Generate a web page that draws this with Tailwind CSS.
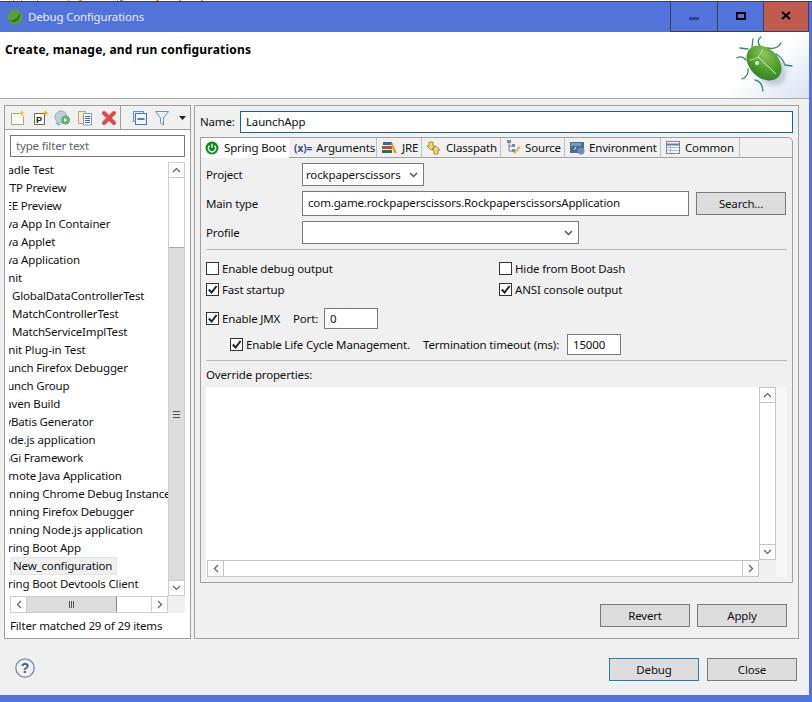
<!DOCTYPE html>
<html>
<head>
<meta charset="utf-8">
<script src="https://cdn.jsdelivr.net/npm/@tailwindcss/browser@4"></script>
</head>
<body class="m-0 bg-white">
<div class="w-[812px] h-[702px] overflow-hidden flex flex-col font-['Noto_Sans',sans-serif] text-[11.5px] tracking-[-0.16px] leading-[16px] text-[#111] bg-[#5273da]">
  <!-- desktop sliver above window -->
  <div class="h-[1px] bg-white shrink-0 flex">
    <div class="ml-[13px] w-[1px] bg-[#e0a040]"></div><div class="ml-[7px] w-[1px] bg-[#aaa]"></div><div class="ml-[15px] w-[1px] bg-[#aaa]"></div><div class="ml-[30px] w-[1px] bg-[#aaa]"></div><div class="ml-[10px] w-[3px] bg-[#e0a040]"></div><div class="ml-[35px] w-[1px] bg-[#aaa]"></div><div class="ml-[2px] w-[3px] bg-[#7090c0]"></div><div class="ml-[33px] w-[3px] bg-[#e0a040]"></div><div class="ml-[20px] w-[2px] bg-[#e0a040]"></div><div class="ml-[20px] w-[2px] bg-[#e0a040]"></div>
  </div>
  <div class="h-[1px] bg-[#3a3f55] shrink-0"></div>
  <!-- title bar -->
  <div class="h-[30px] shrink-0 flex items-stretch bg-[#5273da]">
    <div class="flex-1 flex items-center pl-[7px] gap-[5px] text-white">
      <svg width="16" height="16" viewBox="0 0 17 17"><circle cx="8.500" cy="8.500" r="8" fill="#5a9e3a"/><path d="M2 12c4 1 9-1 12-8 1 5-2 10-7 10-2 0-4-1-5-2z" fill="#2f7a2a"/></svg>
      <span class="text-[#e8edfb]">Debug Configurations</span>
    </div>
    <div class="w-[47px] border-l border-b border-[#3a3f55] flex items-center justify-center pt-[3px]"><div class="w-[10px] h-[3px] bg-[#2e4590]"></div></div>
    <div class="w-[46px] border-l border-b border-[#3a3f55] flex items-center justify-center pb-[2px]"><div class="w-[10px] h-[8px] border-2 border-black"></div></div>
    <div class="w-[46px] border-l border-b border-r border-[#3a3f55] bg-[#c05b50] flex items-center justify-center pb-[2px]">
      <svg width="10" height="9" viewBox="0 0 10 9"><path d="M1 1l8 7M9 1l-8 7" stroke="#000" stroke-width="2.200"/></svg>
    </div>
    <div class="w-[3px]"></div>
  </div>
  <!-- window body -->
  <div class="h-[663px] shrink-0 mr-[3px] flex flex-col bg-[#f0f0f0]">
    <!-- banner -->
    <div class="h-[67px] shrink-0 bg-white border-b border-[#a8a8a8] flex justify-between">
      <div class="pl-[5px] pt-[10px] font-bold text-black text-[12px] tracking-[0.2px]">Create, manage, and run configurations</div>
      <div class="w-[84px] h-[66px] bg-linear-to-br from-white from-45% to-[#dbe1f2]">
        <svg width="80" height="66" viewBox="0 2 80 66">
          <defs>
            <radialGradient id="bd" cx="35%" cy="30%" r="75%"><stop offset="0" stop-color="#8cc45a"/><stop offset=".6" stop-color="#4f9c2c"/><stop offset="1" stop-color="#2f8426"/></radialGradient>
            <filter id="sh" x="-30%" y="-30%" width="160%" height="160%"><feGaussianBlur stdDeviation="2.500"/></filter>
          </defs>
          <ellipse cx="44" cy="38" rx="20" ry="14" transform="rotate(45 44 38)" fill="#8a94b0" opacity=".45" filter="url(#sh)"/>
          <g fill="none" stroke="#2c8a60" stroke-width="1.300" stroke-linecap="round" stroke-linejoin="round">
            <path d="M35 16q-4-5 1-9"/><path d="M42 18q10 2 14-5"/><path d="M23 19l-8-1"/><path d="M27 17l1-8"/><path d="M21 30q-4-5-9-2"/><path d="M23 39q1 7-6 10"/><path d="M30 50q7 1 8 11"/><path d="M51 24q6 3 9 11l7 1"/>
          </g>
          <ellipse cx="39" cy="33" rx="20" ry="14.500" transform="rotate(45 39 33)" fill="url(#bd)"/>
          <path d="M33 27l18 17" stroke="#d8efd8" stroke-width="1"/>
          <path d="M38 19c-2 4-3 6-5 8-3 2-6 3-9 3" stroke="#d8efd8" stroke-width=".7" fill="none"/>
          <circle cx="32" cy="33" r="2" fill="#dcefc4"/>
        </svg>
      </div>
    </div>
    <!-- panels -->
    <div class="flex gap-[3px] pl-[4px] pt-[6px] shrink-0">
      <!-- left panel -->
      <div class="w-[187px] h-[534px] shrink-0 border border-[#a0a0a0] bg-white flex flex-col px-[5px]">
        <div class="h-[24px] -mx-[5px] shrink-0 border-b border-[#a0a0a0] bg-[#f0f0f0] flex items-center">
          <div class="flex items-center pl-[5px] pr-[3px] h-full border-r border-[#a0a0a0]">
            <svg width="16" height="16" viewBox="0 0 16 16"><path d="M1.500 3.500h9l3 3v8h-12z" fill="#fbfbf2" stroke="#a8a878"/><path d="M12 0l1 2 2 1-2 1-1 2-1-2-2-1 2-1z" fill="#f2c94c"/></svg>
            <svg class="ml-[7px]" width="16" height="16" viewBox="0 0 16 16"><path d="M1.500 3.500h10v11h-10z" fill="#fbfbf2" stroke="#6b6b50"/><text x="3" y="13" font-size="9" font-weight="700" font-family="Liberation Sans" fill="#222">P</text><path d="M12.500 0l1 2 2 1-2 1-1 2-1-2-2-1 2-1z" fill="#e0b030"/></svg>
            <svg class="ml-[5px]" width="16" height="16" viewBox="0 0 16 16"><circle cx="7" cy="7" r="6" fill="#c2cede" stroke="#99a8bc"/><circle cx="11.500" cy="10" r="4.500" fill="#5fb36a"/><path d="M10 8l3.500 2-3.500 2z" fill="#fff"/><path d="M2 13l4 2" stroke="#8aa0c0" stroke-width="1.500"/></svg>
            <svg class="ml-[7px]" width="16" height="16" viewBox="0 0 16 16"><path d="M1.500 1.500h7v12h-7z" fill="#f5ecd0" stroke="#b8a878"/><path d="M6.500 3.500h8v11.500h-8z" fill="#fff" stroke="#8a9ab0"/><path d="M8 6.500h5M8 8.500h5M8 10.500h5M8 12.500h5" stroke="#3a6ab0"/></svg>
            <svg class="ml-[8px]" width="16" height="16" viewBox="0 0 16 16"><path d="M3 3l10 10M13 3L3 13" stroke="#e04a4a" stroke-width="4" stroke-linecap="round"/></svg>
          </div>
          <svg class="ml-[11px]" width="16" height="16" viewBox="0 0 16 16"><rect x="1.500" y="1.500" width="10" height="10" fill="#dce8f4" stroke="#6a90b8"/><rect x="3.500" y="3.500" width="11" height="11" fill="#eef4fa" stroke="#4a78a8"/><path d="M5.500 9h7" stroke="#2a5a90" stroke-width="1.500"/></svg>
          <svg class="ml-[6px]" width="16" height="16" viewBox="0 0 16 16"><path d="M1.500 1.500h13l-5 6.500v7l-3-2V8z" fill="#e8f0f8" stroke="#7492b0"/></svg>
          <svg class="ml-[8px]" width="9" height="6" viewBox="0 0 9 6"><path d="M1 1h7L4.500 5z" fill="#222"/></svg>
        </div>
        <div class="mt-[5px] h-[22px] shrink-0 border border-[#767676] pl-[5px] flex items-center text-[#5a6270] bg-white">type filter text</div>
        <!-- list + scrollbar -->
        <div class="mt-[5px] h-[434px] shrink-0 flex -ml-[1px]">
          <div class="w-[159px] shrink-0 overflow-hidden">
            <div class="-mt-[1px] leading-[18px] whitespace-nowrap">
              <div class="h-[18px] -ml-[14px]">Gradle Test</div>
              <div class="h-[18px] -ml-[14px]">HTTP Preview</div>
              <div class="h-[18px] -ml-[13px]">J2EE Preview</div>
              <div class="h-[18px] -ml-[12px]">Java App In Container</div>
              <div class="h-[18px] -ml-[12px]">Java Applet</div>
              <div class="h-[18px] -ml-[12px]">Java Application</div>
              <div class="h-[18px] -ml-[12px]">JUnit</div>
              <div class="h-[18px] pl-[3px]">GlobalDataControllerTest</div>
              <div class="h-[18px] pl-[3px]">MatchControllerTest</div>
              <div class="h-[18px] pl-[3px]">MatchServiceImplTest</div>
              <div class="h-[18px] -ml-[12px]">JUnit Plug-in Test</div>
              <div class="h-[18px] -ml-[14px]">Launch Firefox Debugger</div>
              <div class="h-[18px] -ml-[14px]">Launch Group</div>
              <div class="h-[18px] -ml-[14px]">Maven Build</div>
              <div class="h-[18px] -ml-[14px]">MyBatis Generator</div>
              <div class="h-[18px] -ml-[14px]">Node.js application</div>
              <div class="h-[18px] -ml-[14px]">OSGi Framework</div>
              <div class="h-[18px] -ml-[14px]">Remote Java Application</div>
              <div class="h-[18px] -ml-[14px]">Running Chrome Debug Instance</div>
              <div class="h-[18px] -ml-[14px]">Running Firefox Debugger</div>
              <div class="h-[18px] -ml-[14px]">Running Node.js application</div>
              <div class="h-[18px] -ml-[14px]">Spring Boot App</div>
              <div class="h-[18px] ml-[1px] w-[107px] pl-[2px] bg-[#f0f0f0] border border-[#e4e4e4] leading-[16px]">New_configuration</div>
              <div class="h-[18px] -ml-[14px]">Spring Boot Devtools Client</div>
            </div>
          </div>
          <div class="w-[17px] shrink-0 flex flex-col bg-white border-x border-[#cdcdcd]">
            <div class="h-[16px] border-y border-[#cdcdcd] flex items-center justify-center"><svg width="9" height="6" viewBox="0 0 9 6"><path d="M1 5l3.500-3.500L8 5" fill="none" stroke="#606060" stroke-width="1.200"/></svg></div>
            <div class="h-[69px]"></div>
            <div class="flex-1 bg-[#dcdcdc] border-t border-[#a8a8a8] flex items-center justify-center"><div class="w-[7px] h-[7px] border-y border-[#555] flex items-center"><div class="w-full h-[1px] bg-[#555]"></div></div></div>
            <div class="h-[16px] border-y border-[#cdcdcd] flex items-center justify-center"><svg width="9" height="6" viewBox="0 0 9 6"><path d="M1 1l3.500 3.500L8 1" fill="none" stroke="#606060" stroke-width="1.200"/></svg></div>
          </div>
        </div>
        <div class="h-[17px] shrink-0 flex bg-[#f0f0f0]">
          <div class="w-[158px] flex border border-[#cdcdcd] bg-white">
            <div class="w-[16px] border-r border-[#cdcdcd] flex items-center justify-center"><svg width="6" height="9" viewBox="0 0 6 9"><path d="M5 1L1.500 4.500 5 8" fill="none" stroke="#606060" stroke-width="1.200"/></svg></div>
            <div class="w-[90px] bg-[#dcdcdc] border-r border-[#888] flex items-center justify-center gap-[1px]"><div class="w-[1px] h-[7px] bg-[#555]"></div><div class="w-[1px] h-[7px] bg-[#555]"></div><div class="w-[1px] h-[7px] bg-[#555]"></div></div>
            <div class="flex-1"></div>
            <div class="w-[16px] border-l border-[#cdcdcd] flex items-center justify-center"><svg width="6" height="9" viewBox="0 0 6 9"><path d="M1 1l3.500 3.500L1 8" fill="none" stroke="#606060" stroke-width="1.200"/></svg></div>
          </div>
        </div>
        <div class="mt-[5px] h-[16px] shrink-0">Filter matched 29 of 29 items</div>
      </div>
      <!-- right panel -->
      <div class="w-[605px] h-[534px] shrink-0 border border-[#a0a0a0] flex flex-col px-[5px]">
        <div class="flex items-center h-[22px] mt-[5px] shrink-0">
          <span class="w-[40px]">Name:</span>
          <div class="w-[553px] h-[22px] border border-[#1e5f8e] bg-white pl-[5px] flex items-center">LaunchApp</div>
        </div>
        <!-- tab folder -->
        <div class="mt-[4px] w-[593px] h-[446px] shrink-0 border border-[#a0a0a0] rounded-tr-[5px] flex flex-col">
          <div class="h-[20px] flex items-stretch shrink-0">
            <div class="w-[88px] bg-white rounded-tl-[4px] flex items-center gap-[5px] pl-[4px] shrink-0">
              <svg width="14" height="14" viewBox="0 0 14 14"><circle cx="7" cy="7" r="6.500" fill="#0a8a1f"/><path d="M4.500 4.800a3.500 3.500 0 1 0 5 0" fill="none" stroke="#fff" stroke-width="1.300"/><path d="M7 2.800v4" stroke="#fff" stroke-width="1.300"/></svg>
              <span>Spring Boot</span>
            </div>
            <div class="w-[88px] border-b border-[#a0a0a0] border-r border-r-[#c0c0c0] flex items-center gap-[4px] pl-[5px] shrink-0"><span class="text-[#3a4a7a] text-[10px] font-bold tracking-[0px]">(x)=</span><span>Arguments</span></div>
            <div class="w-[45px] border-b border-[#a0a0a0] border-r border-r-[#c0c0c0] flex items-center gap-[4px] pl-[5px] shrink-0">
              <svg width="16" height="13" viewBox="0 0 16 13"><rect x="0" y="9" width="10" height="3" fill="#3a6a4a"/><rect x="0" y="5" width="10" height="3" fill="#b05030"/><rect x="1" y="1" width="9" height="3" fill="#3a6a9a"/><path d="M10 1l5 11h-3l-3-8z" fill="#e0a030"/></svg><span>JRE</span></div>
            <div class="w-[79px] border-b border-[#a0a0a0] border-r border-r-[#c0c0c0] flex items-center gap-[4px] pl-[5px] shrink-0">
              <svg width="15" height="14" viewBox="0 0 15 14"><path d="M2 1h4v4h2L4 9 0 5h2z" fill="#f3d67a" stroke="#9a7a20" stroke-width=".8"/><path d="M11 13H7V9H5l4-4 4 4h-2z" fill="#f3d67a" stroke="#9a7a20" stroke-width=".8"/></svg><span>Classpath</span></div>
            <div class="w-[64px] border-b border-[#a0a0a0] border-r border-r-[#c0c0c0] flex items-center gap-[4px] pl-[5px] shrink-0">
              <svg width="15" height="15" viewBox="0 0 15 15"><path d="M3 2v9h3M3 6h3" fill="none" stroke="#6a7a9a"/><rect x="1" y="0" width="4" height="3" fill="#7a8aaa"/><rect x="6" y="4" width="3" height="3" fill="#7a8aaa"/><rect x="6" y="9" width="3" height="3" fill="#7a8aaa"/><path d="M7 13l6-7 1.500 1.500-6 6.500z" fill="#e8b040"/></svg><span>Source</span></div>
            <div class="w-[96px] border-b border-[#a0a0a0] border-r border-r-[#c0c0c0] flex items-center gap-[4px] pl-[5px] shrink-0">
              <svg width="15" height="14" viewBox="0 0 15 14"><rect x="0" y="1" width="14" height="11" fill="#4a6a90"/><rect x="1" y="2" width="10" height="3" fill="#7a98b8"/><path d="M4 9l2-3" stroke="#fff"/><circle cx="11" cy="10" r="3.500" fill="#6a8fb8"/></svg><span>Environment</span></div>
            <div class="w-[79px] border-b border-[#a0a0a0] border-r border-r-[#c0c0c0] flex items-center gap-[5px] pl-[5px] shrink-0">
              <svg width="14" height="13" viewBox="0 0 14 13"><rect x="0.500" y="0.500" width="13" height="12" fill="#f4f4f4" stroke="#7a8a9a"/><path d="M0.500 3.500h13" stroke="#6a7a9a" stroke-width="2"/><path d="M1 6.500h12M1 9.500h12M4.500 4v8" stroke="#b0b8c4"/></svg><span>Common</span></div>
            <div class="flex-1 border-b border-[#a0a0a0]"></div>
          </div>
          <!-- tab body -->
          <div class="flex-1 flex flex-col px-[5px]">
            <div class="flex items-center h-[23px] mt-[5px] shrink-0">
              <span class="w-[96px]">Project</span>
              <div class="w-[122px] h-[23px] border border-[#7a7a7a] bg-white pl-[3px] flex items-center justify-between pr-[5px]"><span>rockpaperscissors</span><svg width="9" height="6" viewBox="0 0 9 6"><path d="M1 1l3.500 3.500L8 1" fill="none" stroke="#555" stroke-width="1.500"/></svg></div>
            </div>
            <div class="flex items-center h-[25px] mt-[5px] shrink-0">
              <span class="w-[96px]">Main type</span>
              <div class="w-[387px] h-[25px] border border-[#7a7a7a] bg-white pl-[5px] flex items-center pb-[2px]">com.game.rockpaperscissors.RockpaperscissorsApplication</div>
              <div class="ml-[7px] w-[90px] h-[23px] border border-[#7a7a7a] bg-[#dddddd] flex items-center justify-center">Search...</div>
            </div>
            <div class="flex items-center h-[23px] mt-[5px] shrink-0">
              <span class="w-[96px]">Profile</span>
              <div class="w-[277px] h-[23px] border border-[#7a7a7a] bg-white flex items-center justify-end pr-[5px]"><svg width="9" height="6" viewBox="0 0 9 6"><path d="M1 1l3.500 3.500L8 1" fill="none" stroke="#555" stroke-width="1.500"/></svg></div>
            </div>
            <div class="h-[1px] w-[581px] mt-[5px] bg-[#b8b8b8] shrink-0"></div>
            <div class="flex mt-[8px] h-[21px] items-center shrink-0">
              <div class="w-[293px] flex items-center gap-[3px]"><div class="w-[13px] h-[13px] border border-[#333] bg-white"></div><span>Enable debug output</span></div>
              <div class="flex items-center gap-[3px]"><div class="w-[13px] h-[13px] border border-[#333] bg-white"></div><span>Hide from Boot Dash</span></div>
            </div>
            <div class="flex h-[21px] items-center shrink-0">
              <div class="w-[293px] flex items-center gap-[3px]"><svg width="13" height="13" viewBox="0 0 13 13"><rect x=".5" y=".5" width="12" height="12" fill="#fff" stroke="#333"/><path d="M2.800 6.500l2.800 3 5-6.500" fill="none" stroke="#222" stroke-width="2"/></svg><span>Fast startup</span></div>
              <div class="flex items-center gap-[3px]"><svg width="13" height="13" viewBox="0 0 13 13"><rect x=".5" y=".5" width="12" height="12" fill="#fff" stroke="#333"/><path d="M2.800 6.500l2.800 3 5-6.500" fill="none" stroke="#222" stroke-width="2"/></svg><span>ANSI console output</span></div>
            </div>
            <div class="flex h-[21px] mt-[8px] items-center shrink-0">
              <svg width="13" height="13" viewBox="0 0 13 13"><rect x=".5" y=".5" width="12" height="12" fill="#fff" stroke="#333"/><path d="M2.800 6.500l2.800 3 5-6.500" fill="none" stroke="#222" stroke-width="2"/></svg><span class="ml-[3px] w-[71px]">Enable JMX</span><span class="w-[31px]">Port:</span>
              <div class="w-[54px] h-[21px] border border-[#7a7a7a] bg-white pl-[5px] flex items-center">0</div>
            </div>
            <div class="flex h-[21px] mt-[5px] items-center pl-[24px] shrink-0">
              <svg width="13" height="13" viewBox="0 0 13 13"><rect x=".5" y=".5" width="12" height="12" fill="#fff" stroke="#333"/><path d="M2.800 6.500l2.800 3 5-6.500" fill="none" stroke="#222" stroke-width="2"/></svg><span class="ml-[3px] w-[177px]">Enable Life Cycle Management.</span><span class="w-[144px]">Termination timeout (ms):</span>
              <div class="w-[54px] h-[21px] border border-[#7a7a7a] bg-white pl-[5px] flex items-center">15000</div>
            </div>
            <div class="h-[1px] w-[581px] mt-[5px] bg-[#b8b8b8] shrink-0"></div>
            <div class="mt-[6px] h-[16px] shrink-0">Override properties:</div>
            <div class="mt-[4px] w-[581px] h-[190px] shrink-0 flex bg-[#f7f7f7]">
              <div class="w-[570px] flex flex-col bg-white">
                <div class="flex-1 flex">
                  <div class="flex-1"></div>
                  <div class="w-[17px] flex flex-col justify-between border-x border-[#c4c4c4]"><div class="h-[16px] border-y border-[#c4c4c4] flex items-center justify-center"><svg width="9" height="6" viewBox="0 0 9 6"><path d="M1 5l3.500-3.500L8 5" fill="none" stroke="#606060" stroke-width="1.200"/></svg></div><div class="h-[16px] border-y border-[#c4c4c4] flex items-center justify-center"><svg width="9" height="6" viewBox="0 0 9 6"><path d="M1 1l3.500 3.500L8 1" fill="none" stroke="#606060" stroke-width="1.200"/></svg></div></div>
                </div>
                <div class="h-[17px] flex">
                  <div class="flex-1 ml-[1px] flex border border-[#c4c4c4]">
                    <div class="w-[16px] border-r border-[#c4c4c4] flex items-center justify-center"><svg width="6" height="9" viewBox="0 0 6 9"><path d="M5 1L1.500 4.500 5 8" fill="none" stroke="#606060" stroke-width="1.200"/></svg></div>
                    <div class="flex-1"></div>
                    <div class="w-[16px] border-l border-[#c4c4c4] flex items-center justify-center"><svg width="6" height="9" viewBox="0 0 6 9"><path d="M1 1l3.500 3.500L1 8" fill="none" stroke="#606060" stroke-width="1.200"/></svg></div>
                  </div>
                  <div class="w-[17px] bg-[#f0f0f0]"></div>
                </div>
              </div>
            </div>
          </div>
        </div>
        <div class="flex justify-end gap-[7px] mt-[21px] pr-[6px] shrink-0">
          <div class="w-[90px] h-[23px] border border-[#7a7a7a] bg-[#dddddd] flex items-center justify-center">Revert</div>
          <div class="w-[90px] h-[23px] border border-[#7a7a7a] bg-[#dddddd] flex items-center justify-center">Apply</div>
        </div>
      </div>
    </div>
    <!-- footer -->
    <div class="flex items-start justify-between pl-[15px] pr-[12px] pt-[19px] shrink-0">
      <svg width="20" height="20" viewBox="0 0 20 20"><circle cx="10" cy="10" r="9.200" fill="#eef1f6" stroke="#7a8aa8" stroke-width="1.300"/><text x="10" y="15" text-anchor="middle" font-size="14" font-weight="700" font-family="Liberation Sans" fill="#4a5a7a">?</text></svg>
      <div class="flex gap-[8px]">
        <div class="w-[90px] h-[23px] border border-[#2b7ab0] bg-[#dddddd] flex items-center justify-center">Debug</div>
        <div class="w-[90px] h-[23px] border border-[#7a7a7a] bg-[#dddddd] flex items-center justify-center">Close</div>
      </div>
    </div>
  </div>
</div>
</body>
</html>
